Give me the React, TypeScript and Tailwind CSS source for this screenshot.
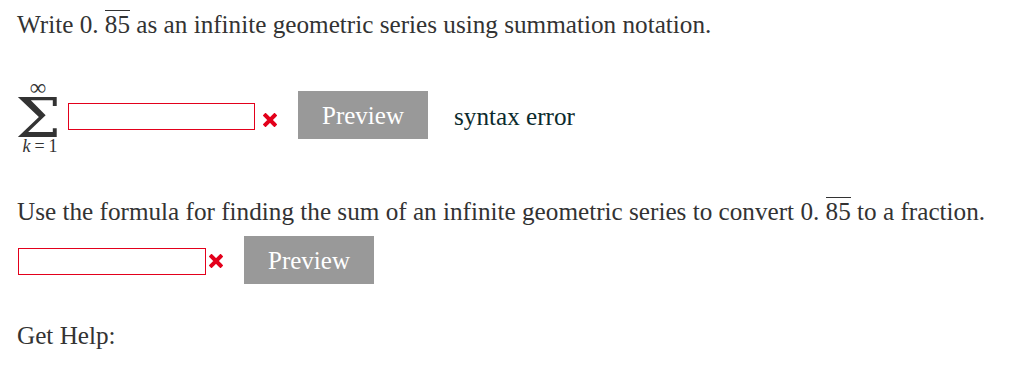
import React from 'react';

const serif = { fontFamily: '"Liberation Serif", "Times New Roman", serif' };

function Repeat({ whole, digits }: { whole: string; digits: string }) {
  return (
    <span>
      {whole}.{' '}
      <span className="border-t-[1.5px] border-[#333]">{digits}</span>
    </span>
  );
}

function ErrX() {
  return (
    <svg width="14" height="14" viewBox="0 0 14 14" className="block">
      <path d="M2.5 2.5 L11.5 11.5 M11.5 2.5 L2.5 11.5" stroke="#e3001b" strokeWidth="4" strokeLinecap="square" />
    </svg>
  );
}

function Preview({ className = '' }: { className?: string }) {
  return (
    <button
      type="button"
      className={`h-[48px] w-[130px] shrink-0 bg-[#999999] text-[25px] leading-none text-white ${className}`}
      style={serif}
    >
      Preview
    </button>
  );
}

export default function App() {
  return (
    <div className="h-[373px] w-[1024px] overflow-hidden bg-white pl-[17px] pt-[12px] text-[25.2px] leading-none text-[#333]" style={serif}>
      <p className="h-[25px] whitespace-nowrap">
        Write <Repeat whole="0" digits="85" /> as an infinite geometric series using summation notation.
      </p>

      {/* sum row */}
      <div className="mt-[46px] flex items-start">
        <div className="flex w-[42px] shrink-0 flex-col items-center">
          <span className="h-[14px] text-[23px] leading-[10px]">∞</span>
          <span
            className="block h-[40px] origin-center scale-x-[1.2] text-[54px] leading-[43px]"
            style={{ fontFamily: '"DejaVu Serif", "Liberation Serif", serif' }}
          >
            Σ
          </span>
          <span className="flex h-[18px] items-baseline gap-[4px] pl-[4px] text-[18px] leading-[18px]">
            <i>k</i>
            <span>=</span>
            <span>1</span>
          </span>
        </div>
        <input
          className="ml-[9px] mt-[20px] h-[27px] w-[187px] border border-[#e3001b] bg-white outline-none"
          aria-label="answer 1"
        />
        <span className="ml-[8px] mt-[30px]">
          <ErrX />
        </span>
        <Preview className="ml-[21px] mt-[8px]" />
        <span className="ml-[26px] mt-[21px] text-[#0b2b2d]">syntax error</span>
      </div>

      <p className="mt-[44px] h-[25px] whitespace-nowrap">
        Use the formula for finding the sum of an infinite geometric series to convert{' '}
        <Repeat whole="0" digits="85" /> to a fraction.
      </p>

      {/* fraction row */}
      <div className="mt-[12px] flex items-start">
        <input
          className="ml-[1px] mt-[12px] h-[27px] w-[188px] border border-[#e3001b] bg-white outline-none"
          aria-label="answer 2"
        />
        <span className="ml-[3px] mt-[18px]">
          <ErrX />
        </span>
        <Preview className="ml-[21px]" />
      </div>

      <p className="mt-[39px]">Get Help:</p>
    </div>
  );
}
